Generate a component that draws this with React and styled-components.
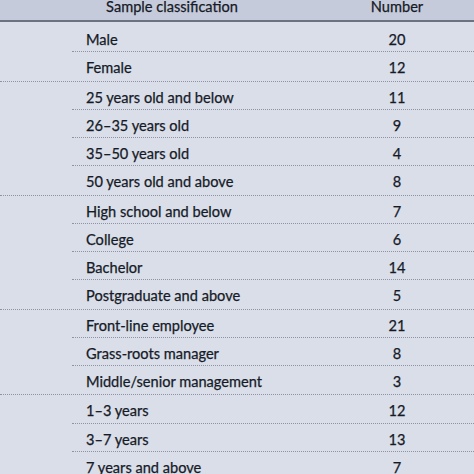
import React from "react";
import styled, { createGlobalStyle } from "styled-components";

const Global = createGlobalStyle`
  html, body { margin: 0; padding: 0; background: #d9dee9; }
  body { font-family: Lato, "Noto Sans", sans-serif; }
`;

const Page = styled.div`
  width: 474px;
  height: 474px;
  overflow: hidden;
  background: #d9dee9;
  color: #161a27;
  font-family: Lato, "Noto Sans", sans-serif;
  font-size: 14.6px;
  -webkit-text-stroke: 0.25px #161a27;
`;

const Header = styled.div`
  display: grid;
  grid-template-columns: 320px 154px;
  height: 20px;
  background: #c6cbdb;
  border-bottom: 2px solid #6c7282;
  overflow: hidden;
`;

const HeaderCell = styled.div`
  text-align: center;
  line-height: 14px;
  margin-top: 0;
  padding-left: ${(p) => p.$offset || 0}px;
`;

const Body = styled.div`
  padding-top: 2px;
`;

const Group = styled.div`
  display: flex;
  border-bottom: 1px dotted #8d93a2;
`;

const GroupCell = styled.div`
  width: 72px;
  flex: none;
`;

const Rows = styled.div`
  flex: 1;
  display: flex;
  flex-direction: column;
`;

const Row = styled.div`
  display: grid;
  grid-template-columns: 248px 154px;
  height: 28.27px;
  box-sizing: border-box;
  border-bottom: ${(p) => (p.$last ? "none" : "1px dotted #8d93a2")};
  line-height: 18px;
  padding-top: 7px;
`;

const Label = styled.div`
  padding-left: 14px;
  white-space: nowrap;
`;

const Num = styled.div`
  text-align: center;
`;

const groups = [
  [
    ["Male", 20],
    ["Female", 12],
  ],
  [
    ["25 years old and below", 11],
    ["26–35 years old", 9],
    ["35–50 years old", 4],
    ["50 years old and above", 8],
  ],
  [
    ["High school and below", 7],
    ["College", 6],
    ["Bachelor", 14],
    ["Postgraduate and above", 5],
  ],
  [
    ["Front-line employee", 21],
    ["Grass-roots manager", 8],
    ["Middle/senior management", 3],
  ],
  [
    ["1–3 years", 12],
    ["3–7 years", 13],
    ["7 years and above", 7],
  ],
];

export default function App() {
  return (
    <>
      <Global />
      <Page>
        <Header>
          <HeaderCell $offset={24}>Sample classification</HeaderCell>
          <HeaderCell>Number</HeaderCell>
        </Header>
        <Body>
          {groups.map((g, gi) => (
            <Group key={gi}>
              <GroupCell />
              <Rows>
                {g.map(([label, n], i) => (
                  <Row key={label} $last={i === g.length - 1}>
                    <Label>{label}</Label>
                    <Num>{n}</Num>
                  </Row>
                ))}
              </Rows>
            </Group>
          ))}
        </Body>
      </Page>
    </>
  );
}
